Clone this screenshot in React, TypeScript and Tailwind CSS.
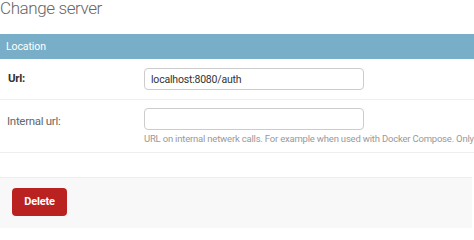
export default function App() {
  return (
    <div className="w-[474px] h-[228px] overflow-hidden bg-white font-['Roboto',sans-serif] text-[#333]">
      <h1 className="mt-[-4px] h-[38px] text-[17px] leading-[24px] font-light tracking-[-0.4px] text-[#666] whitespace-nowrap">
        Change server
      </h1>

      <fieldset>
        <h2 className="h-[25px] flex items-center pl-[6px] bg-[#79aec8] text-white text-[10.5px] tracking-[-0.1px]">
          Location
        </h2>

        <div className="flex items-center h-[41px] border-b border-[#eee]">
          <label className="w-[144px] pl-[8px] text-[11.5px] font-bold tracking-[-0.3px] text-[#333]">Url:</label>
          <input
            readOnly
            value="localhost:8080/auth"
            className="w-[220px] h-[22px] px-[6px] border border-[#ccc] rounded-[4px] text-[10.5px] tracking-[-0.2px] text-[#333] outline-none"
          />
        </div>

        <div className="flex items-start h-[53px] border-b border-[#eee] pt-[8px]">
          <label className="w-[144px] pl-[7px] mt-[5px] text-[11.5px] tracking-[-0.3px] text-[#666]">Internal url:</label>
          <div className="flex flex-col">
            <input
              readOnly
              className="w-[220px] h-[22px] px-[6px] border border-[#ccc] rounded-[4px] text-[10px] outline-none"
            />
            <p className="mt-[3px] text-[9.5px] leading-[12px] tracking-[-0.2px] text-[#999] whitespace-nowrap">
              URL on internal netwerk calls. For example when used with Docker Compose. Only set this when you need it.
            </p>
          </div>
        </div>
      </fieldset>

      <div className="mt-[24px] w-[472px] h-[60px] border-t border-[#eee] bg-[#f8f8f8] pt-[10px] pl-[12px]">
        <button className="w-[55px] h-[28px] rounded-[4px] bg-[#ba2121] text-white text-[11px] font-bold tracking-[-0.2px]">
          Delete
        </button>
      </div>
    </div>
  );
}
